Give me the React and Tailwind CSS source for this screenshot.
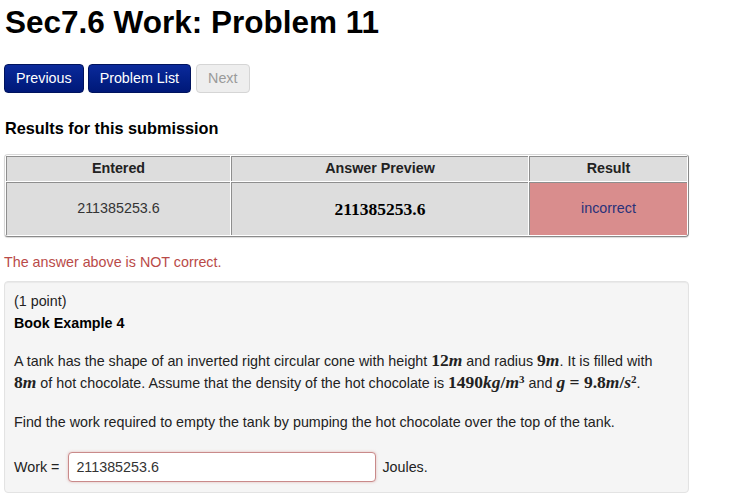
import React from 'react'

const sans = { fontFamily: '"Liberation Sans", Arial, sans-serif' }

// bold math in the problem text, letters set italic
function M({ children }) {
  return (
    <span className="font-['Liberation_Serif',serif] text-[17.5px] font-bold leading-none">{children}</span>
  )
}

function V({ children }) {
  return <i className="font-bold">{children}</i>
}

function NavButton({ label, disabled }) {
  if (disabled) {
    return (
      <button className="ml-[1px] h-[29px] rounded-[4px] border border-[#d5d5d5] bg-[#eeeeee] px-[11px] text-[14.3px] text-[#9a9a9a]">
        {label}
      </button>
    )
  }
  return (
    <button className="h-[29px] rounded-[4px] border border-[#00135e] bg-gradient-to-b from-[#0b2a9b] to-[#001878] px-[11px] text-[14.3px] text-white">
      {label}
    </button>
  )
}

export default function App() {
  return (
    <div className="min-h-[497px] bg-white px-[4px] text-[#1a1a1a]" style={sans}>
      <h1 className="pt-[5px] pl-[1px] text-[31.5px] font-bold leading-[34px] text-black">Sec7.6 Work: Problem 11</h1>

      <div className="mt-[25px] flex gap-[4px]">
        <NavButton label="Previous" />
        <NavButton label="Problem List" />
        <NavButton label="Next" disabled />
      </div>

      <h2 className="mt-[25px] pl-[1px] text-[16.3px] font-bold leading-[20px] text-black">Results for this submission</h2>

      <div className="mt-[16px] w-[685px] overflow-hidden rounded-[4px] border border-t-[#d8d8d8] border-l-[#d8d8d8] border-r-[#8a8a8a] border-b-[#8a8a8a] bg-white p-[1px] shadow-[0_1px_1px_rgba(0,0,0,0.15)]">
        <div className="grid grid-cols-[224px_297px_1fr] grid-rows-[25px_53px] gap-[1px] bg-white text-[14.3px]">
          <div className="flex items-center justify-center border-t border-l border-[#8e8e8e] bg-[#dddddd] font-bold text-[#222]">Entered</div>
          <div className="flex items-center justify-center border-t border-l border-[#8e8e8e] bg-[#dddddd] font-bold text-[#222]">Answer Preview</div>
          <div className="flex items-center justify-center border-t border-l border-[#8e8e8e] bg-[#dddddd] font-bold text-[#222]">Result</div>
          <div className="flex items-center justify-center border-t border-l border-[#8e8e8e] bg-[#dddddd] text-[#333]">211385253.6</div>
          <div className="flex items-center justify-center border-t border-l border-[#8e8e8e] bg-[#dddddd]">
            <span className="font-['Liberation_Serif',serif] text-[17.5px] font-bold text-black">211385253.6</span>
          </div>
          <div className="flex items-center justify-center border-t border-l border-[#8e8e8e] bg-[#d98d8d] text-[#29327a]">incorrect</div>
        </div>
      </div>

      <p className="mt-[15px] text-[14.3px] leading-[20px] text-[#b94a48]">The answer above is NOT correct.</p>

      <div className="mt-[9px] w-[685px] rounded-[4px] border border-[#e3e3e3] bg-[#f5f5f5] pl-[9px] pr-[16px] pt-[9px] pb-[10px] text-[14.3px] leading-[20px] text-[#222] shadow-[inset_0_1px_1px_rgba(0,0,0,0.05)]">
        <p>(1 point)</p>
        <p className="mt-[2px] font-bold text-black">Book Example 4</p>

        <p className="mt-[17px] leading-[22px]">
          A tank has the shape of an inverted right circular cone with height <M>12<V>m</V></M> and radius <M>9<V>m</V></M>. It is filled with{' '}
          <M>8<V>m</V></M> of hot chocolate. Assume that the density of the hot chocolate is{' '}
          <M>
            1490<V>kg</V>/<V>m</V>
            <sup className="text-[11px]">3</sup>
          </M>{' '}
          and{' '}
          <M>
            <V>g</V> = 9.8<V>m</V>/<V>s</V>
            <sup className="text-[11px]">2</sup>
          </M>
          .
        </p>

        <p className="mt-[18px]">Find the work required to empty the tank by pumping the hot chocolate over the top of the tank.</p>

        <div className="mt-[20px] flex items-center">
          <span>Work =</span>
          <input
            readOnly
            value="211385253.6"
            className="ml-[9px] h-[30px] w-[308px] rounded-[4px] border border-[#c98a8a] bg-white px-[7px] text-[14.3px] text-[#333] shadow-[0_0_3px_rgba(185,74,72,0.35)] outline-none"
            style={sans}
          />
          <span className="ml-[6px]">Joules.</span>
        </div>
      </div>
    </div>
  )
}
